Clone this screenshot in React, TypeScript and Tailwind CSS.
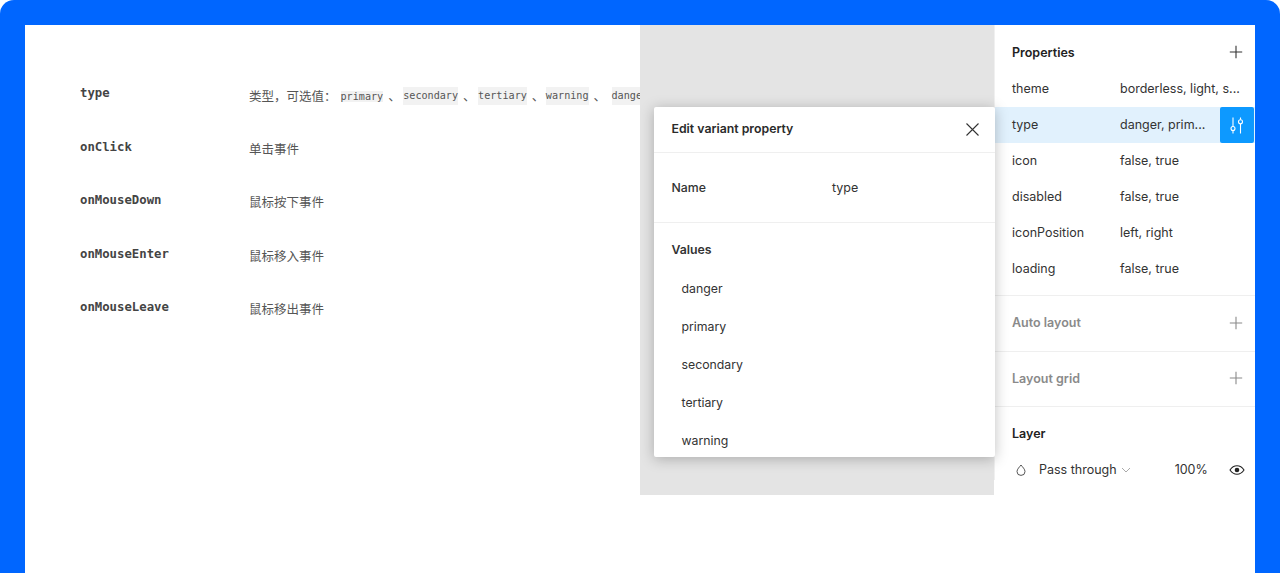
import React from "react";

const inter = "font-['Inter',sans-serif]";
const mono = "font-['DejaVu_Sans_Mono','Liberation_Mono',monospace]";
const cjk = "font-['Noto_Sans_CJK_SC','Noto_Sans_CJK_JP',sans-serif]";

function Plus({ dim }: { dim?: boolean }) {
  return (
    <svg width="14" height="14" viewBox="0 0 14 14" className="mb-[2px] block">
      <path d="M7 .8v12.4M.8 7h12.4" stroke={dim ? "#8a8a8a" : "#333"} strokeWidth="1.1" fill="none" />
    </svg>
  );
}

function Code({ children }: { children: React.ReactNode }) {
  return (
    <code className={`${mono} bg-[#f2f2f2] text-[10.15px] text-[#555]`}>{children}</code>
  );
}

const docs: [string, string][] = [
  ["onClick", "单击事件"],
  ["onMouseDown", "鼠标按下事件"],
  ["onMouseEnter", "鼠标移入事件"],
  ["onMouseLeave", "鼠标移出事件"],
];

const props: [string, string][] = [
  ["theme", "borderless, light, s..."],
  ["type", "danger, prim..."],
  ["icon", "false, true"],
  ["disabled", "false, true"],
  ["iconPosition", "left, right"],
  ["loading", "false, true"],
];

function DocRow({ name, children }: { name: string; children: React.ReactNode }) {
  return (
    <div className="flex h-[53.5px] items-start whitespace-nowrap">
      <div className={`${mono} w-[169px] shrink-0 text-[12.3px] leading-[18px] font-bold text-[#444]`}>{name}</div>
      <div className={`${cjk} mt-[2px] flex items-center text-[12.5px] leading-[18px] text-[#555]`}>{children}</div>
    </div>
  );
}

export default function App() {
  return (
    <div className={`${inter} h-[573px] w-[1280px] overflow-hidden bg-white`}>
      <div className="h-full rounded-t-[14px] bg-[#0066ff] px-[25px] pt-[25px]">
        <div className="flex h-[548px] items-start bg-white">
          {/* doc column */}
          <div className="w-[615px] shrink-0 overflow-hidden pt-[59px] pl-[55px]">
            <DocRow name="type">
              <span>类型，可选值：</span>
              <span className="ml-[4px]"><Code>primary</Code></span>
              <span className="w-[20px] pl-[5px]">、</span>
              <Code>secondary</Code>
              <span className="w-[20px] pl-[5px]">、</span>
              <Code>tertiary</Code>
              <span className="w-[19px] pl-[5px]">、</span>
              <Code>warning</Code>
              <span className="w-[23px] pl-[5px]">、</span>
              <Code>danger</Code>
            </DocRow>
            {docs.map(([n, d]) => (
              <DocRow key={n} name={n}>{d}</DocRow>
            ))}
          </div>

          {/* gray canvas */}
          <div className="relative z-10 h-[470px] w-[354px] shrink-0 bg-[#e4e4e4] pt-[82px] pl-[14px]">
            <div className="h-[350px] w-[341px] overflow-hidden rounded-[2px] bg-white text-[#333] shadow-[0_2px_14px_rgba(0,0,0,0.25)]">
              <div className="flex h-[46px] items-center justify-between border-b border-[#efefef] pr-[16px] pl-[17.5px]">
                <span className="text-[12.3px] font-semibold text-[#2a2a2a]">Edit variant property</span>
                <svg width="13" height="13" viewBox="0 0 13 13" className="block">
                  <path d="M.5.5l12 12M12.5.5l-12 12" stroke="#333" strokeWidth="1.1" fill="none" />
                </svg>
              </div>
              <div className="flex h-[70px] items-center border-b border-[#efefef] pt-[1px] pl-[17.5px] text-[12.3px]">
                <span className="w-[160.5px] font-medium">Name</span>
                <span className="text-[12.5px]">type</span>
              </div>
              <div className="flex h-[54px] items-center pt-[1px] pl-[17.5px] text-[12.3px] font-semibold">Values</div>
              <div className="-mt-[7px]">
                {["danger", "primary", "secondary", "tertiary", "warning"].map((v) => (
                  <div key={v} className="flex h-[38px] items-center pl-[27.5px] text-[12.3px]">{v}</div>
                ))}
              </div>
            </div>
          </div>

          {/* properties panel */}
          <div className="min-w-0 flex-1 border-l border-[#f0f0f0] pt-[10px] text-[12.5px] text-[#333]">
            <div className="flex h-[36px] items-center justify-between pr-[12px] pl-[17px]">
              <span className="font-semibold text-[#222]">Properties</span>
              <Plus />
            </div>
            <div className="pb-[8px]">
              {props.map(([k, v]) => (
                <div
                  key={k}
                  className={`flex h-[36px] items-center whitespace-nowrap pl-[17px] ${k === "type" ? "relative bg-[#e1f1fd]" : ""}`}
                >
                  <span className="w-[108px]">{k}</span>
                  <span>{v}</span>
                  {k === "type" && (
                    <span className="absolute top-0 right-px flex h-full w-[34px] items-center justify-center rounded-[2px] bg-[#0d99ff]">
                      <svg width="14" height="17" viewBox="0 0 14 16" className="block">
                        <g stroke="#fff" strokeWidth="1.1" fill="none">
                          <path d="M3 0v9M3 13v3M10.5 0v2M10.5 6.5V16" />
                          <circle cx="3" cy="11" r="2" />
                          <circle cx="10.5" cy="4.2" r="2" />
                        </g>
                      </svg>
                    </span>
                  )}
                </div>
              ))}
            </div>
            <div className="flex h-[56px] items-center justify-between border-t border-[#efefef] pr-[12px] pl-[17px]">
              <span className="font-semibold text-[#8a8a8a]">Auto layout</span>
              <Plus dim />
            </div>
            <div className="flex h-[55px] items-center justify-between border-t border-[#efefef] pr-[12px] pl-[17px]">
              <span className="font-semibold text-[#8a8a8a]">Layout grid</span>
              <Plus dim />
            </div>
            <div className="border-t border-[#efefef]">
              <div className="flex h-[54px] items-center pl-[17px] font-semibold text-[#222]">Layer</div>
              <div className="-mt-[1px] flex h-[20px] items-center pl-[21px]">
                <svg width="10" height="12" viewBox="0 0 10 12" className="block">
                  <path d="M5 1C3.5 3 1 5.2 1 7.6A4 3.8 0 0 0 9 7.6C9 5.2 6.5 3 5 1Z" stroke="#555" strokeWidth="1" fill="none" />
                </svg>
                <span className="ml-[13px]">Pass through</span>
                <svg width="10" height="6" viewBox="0 0 10 6" className="ml-[4px] block">
                  <path d="M1 1l4 4 4-4" stroke="#aaa" strokeWidth="1" fill="none" />
                </svg>
                <span className="ml-[44px]">100%</span>
                <svg width="16" height="10" viewBox="0 0 16 10" className="ml-[21px] block">
                  <path d="M1 5C3 2 5.2.8 8 .8S13 2 15 5c-2 3-4.2 4.2-7 4.2S3 8 1 5Z" stroke="#222" strokeWidth="1.1" fill="none" />
                  <circle cx="8" cy="5" r="2.3" fill="#222" />
                </svg>
              </div>
            </div>
          </div>
        </div>
      </div>
    </div>
  );
}
